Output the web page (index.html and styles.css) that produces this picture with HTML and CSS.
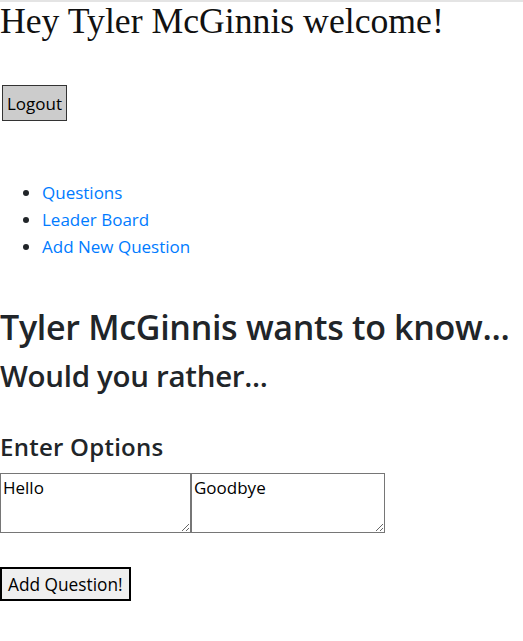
FILE: index.html
```html
<!DOCTYPE html>
<html lang="en">
<head>
<meta charset="utf-8">
<title>Would You Rather</title>
<link rel="stylesheet" href="styles.css">
</head>
<body>
<div class="rule"></div>
<h1 class="greeting">Hey Tyler McGinnis welcome!</h1>
<div class="logout-wrap"><button class="logout" type="button">Logout</button></div>
<ul class="nav">
  <li><a href="#">Questions</a></li>
  <li><a href="#">Leader Board</a></li>
  <li><a href="#">Add New Question</a></li>
</ul>
<h2 class="asker">Tyler McGinnis wants to know...</h2>
<h3 class="prompt">Would you rather...</h3>
<h5 class="options-title">Enter Options</h5>
<div class="options">
  <textarea class="option">Hello</textarea><textarea class="option option-b">Goodbye</textarea>
</div>
<div class="submit-wrap"><button class="submit" type="button">Add Question!</button></div>
</body>
</html>
```
FILE: styles.css
```css
html, body {
  margin: 0;
  padding: 0;
  background: #fff;
}
body {
  font-family: "Open Sans", "Noto Sans", sans-serif;
  font-size: 18px;
  line-height: 1.5;
  color: #212529;
}
.rule {
  height: 2px;
  background: #e4e4e4;
}
.greeting {
  font-family: "Liberation Serif", "Times New Roman", serif;
  font-weight: normal;
  font-size: 35.7px;
  line-height: 38px;
  margin: 0;
  color: #111;
}
.logout-wrap {
  margin-top: 45px;
  padding-left: 2px;
}
.logout {
  font-family: "Open Sans", sans-serif;
  font-size: 17px;
  height: 36px;
  padding: 0 4px;
  background: #cccccc;
  border: 1px solid #333;
  border-radius: 0;
  color: #000;
}
.nav {
  margin: 58px 0 0;
  padding-left: 42px;
  font-size: 17px;
  line-height: 27px;
}
.nav a {
  color: #007bff;
  text-decoration: none;
}
.asker {
  margin: 46px 0 0;
  font-size: 34px;
  letter-spacing: -0.3px;
  font-weight: 600;
  line-height: 43px;
}
.prompt {
  margin: 8px 0 0;
  font-size: 29.5px;
  letter-spacing: -0.3px;
  font-weight: 600;
  line-height: 38px;
}
.options-title {
  margin: 38px 0 0;
  font-size: 24px;
  letter-spacing: 0.25px;
  font-weight: 600;
  line-height: 28px;
}
.options {
  display: flex;
  margin-top: 12px;
}
.option {
  box-sizing: border-box;
  width: 191px;
  height: 60px;
  margin: 0;
  padding: 3px 2px 2px;
  font-family: "Open Sans", sans-serif;
  font-size: 17px;
  line-height: 1.3;
  color: #000;
  border: 1px solid #767676;
}
.option-b {
  width: 194px;
}
.submit-wrap {
  margin-top: 34px;
}
.submit {
  box-sizing: border-box;
  height: 34px;
  padding: 0 6px;
  font-family: "Open Sans", sans-serif;
  font-size: 17.3px;
  background: #efefef;
  border: 2px solid #000;
  border-radius: 0;
  color: #000;
}
```
